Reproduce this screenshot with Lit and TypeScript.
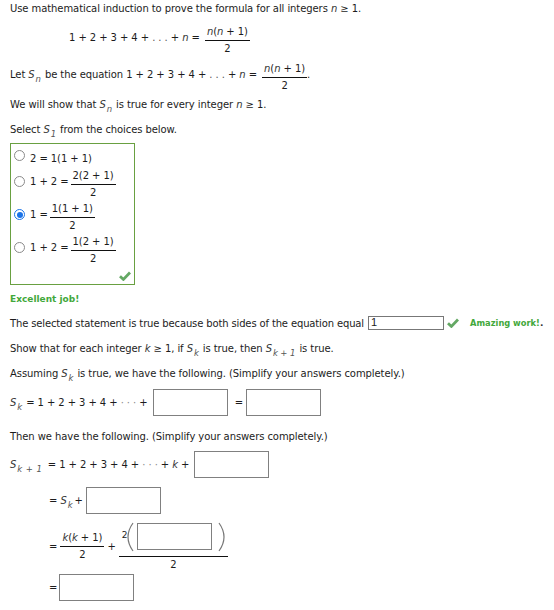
import { LitElement, html, css } from "lit";
import { customElement } from "lit/decorators.js";

const frac = (n: unknown, d: unknown, cls = "") =>
  html`<span class="frac ${cls}"><span class="num">${n}</span><span class="den">${d}</span></span>`;
const S = (s: string, cls = "") => html`<span class="s ${cls}"><i>S</i><sub>${s}</sub></span>`;
const nFrac = () => frac(html`<i>n</i>(<i>n</i> + 1)`, "2");
const dots = html`<span class="dots">. . .</span>`;
const cdots = html`<span class="cdots">· · ·</span>`;

@customElement("app-root")
export class AppRoot extends LitElement {
  static styles = css`
    :host { display: block; width: 554px; height: 610px; overflow: hidden; background: #fff;
      font-family: "DejaVu Sans", Verdana, sans-serif; font-size: 10px; letter-spacing: -0.08px; color: #1c1c1c; }
    .page { padding: 0 0 0 10px; display: flex; flex-direction: column; }
    .line { display: flex; align-items: center; white-space: pre; height: 16px; }
    .r30 { height: 30px; }
    .r27 { height: 27px; }
    .r50 { height: 50px; }
    .r14 { height: 14px; }
    .eq1 { margin-top: 6px; padding-left: 59px; }
    .let { margin-top: 7px; }
    .m7 { margin-top: 7px; }
    .m8 { margin-top: 8px; }
    .m9 { margin-top: 9px; }
    .m10 { margin-top: 10px; }
    .m12 { margin-top: 12px; }
    .m3 { margin-top: 3px; }
    .tight { letter-spacing: -0.14px; }
    i { color: #333; font-style: italic; }
    .s { display: inline-flex; align-items: baseline; margin-right: 4px; }
    .s.wide { margin-right: 6px; word-spacing: 1px; }
    .s.close { margin-right: 2px; }
    sub { font-size: 8.5px; line-height: 0; position: relative; top: 4px; margin-left: 1px; color: #555; font-style: italic; }
    .frac { display: inline-flex; flex-direction: column; align-items: stretch; text-align: center; margin: 5px 0 0 2px; }
    .frac.mid { margin: 0; }
    .frac.opt1 { margin-left: -1px; }
    .num { border-bottom: 1.5px solid #111; padding: 0 2px 2px; line-height: 13px; }
    .den { line-height: 13px; padding-top: 1px; }
    .dots { color: #555; }
    .cdots { color: #888; }
    .box { width: 125px; height: 142px; box-sizing: border-box; border: 1.5px solid #69a041; position: relative; margin-top: 6px; padding-top: 5px; display: flex; flex-direction: column; }
    .opt { display: flex; align-items: center; white-space: pre; height: 33px; padding-left: 2px; }
    .opt.first { height: 19px; margin-bottom: -3px; }
    .radio { width: 9px; height: 9px; border-radius: 50%; border: 1px solid #8a8a8a; background: #fff; margin: 0 5px 0 1px; flex: none; }
    .radio.first { align-self: flex-start; margin-top: 1px; }
    .radio.on { border-color: #1a73e8; position: relative; }
    .radio.on::after { content: ""; position: absolute; inset: 1.5px; border-radius: 50%; background: #1a73e8; }
    .boxcheck { position: absolute; right: 3px; bottom: 3px; display: flex; }
    .excellent { margin-top: 7px; font-size: 9px; letter-spacing: 0; font-weight: 700; color: #42a83a; height: 14px; line-height: 14px; }
    .field { box-sizing: border-box; width: 75px; height: 27px; border: 1.5px solid #808080; background: #fff; flex: none; margin-left: 2px; }
    .field.tail { margin-left: 0; }
    .field.near { margin-left: 0; }
    .field.last { margin-left: -1px; }
    .small { box-sizing: border-box; width: 76px; height: 14px; border: 1.5px solid #777; margin-left: 1px; padding-left: 2px; line-height: 11px; font-family: "Liberation Sans", sans-serif; font-size: 11px; flex: none; }
    .tick { margin-left: 3px; display: inline-flex; }
    .amazing { font-size: 8.3px; letter-spacing: 0; font-weight: 700; color: #42a83a; margin-left: 11px; }
    .period { font-size: 9px; font-weight: 700; color: #333; }
    .eqsep { margin: 0 3px 0 7px; }
    .indent { padding-left: 39px; }
    .big { display: inline-flex; flex-direction: column; margin-left: 0; width: 109px; }
    .big .num { display: flex; align-items: center; padding: 0 0 0 3px; height: 35px; border-bottom: 1.5px solid #111; }
    .big .den { text-align: center; }
    .big .sm2 { font-size: 9px; margin-bottom: 7px; }
    .big .field { margin: 0 0 4px 0; }
    .paren { flex: none; margin-bottom: 4px; }
    .paren.l { margin-right: 3px; }
    .paren.r { margin-left: 6px; }
  `;

  check() {
    return html`<svg width="12" height="10" viewBox="0 0 12 10"><path d="M1 5.2 L4.4 8.4 L11 1.6" fill="none" stroke="#64a864" stroke-width="2.8"/></svg>`;
  }

  render() {
    return html`<div class="page">
      <div class="line">Use mathematical induction to prove the formula for all integers <i>n</i> ≥ 1.</div>
      <div class="line r30 eq1">1 + 2 + 3 + 4 + ${dots} + <i>n</i> = ${nFrac()}</div>
      <div class="line r30 let">Let ${S("n")}be the equation 1 + 2 + 3 + 4 + ${dots} + <i>n</i> = ${nFrac()}.</div>
      <div class="line m7">We will show that ${S("n")}is true for every integer <i>n</i> ≥ 1.</div>
      <div class="line m9">Select ${S("1")}from the choices below.</div>
      <div class="box">
        <div class="opt first"><span class="radio first"></span>2 = 1(1 + 1)</div>
        <div class="opt"><span class="radio"></span>1 + 2 = ${frac("2(2 + 1)", "2", "opt1")}</div>
        <div class="opt"><span class="radio on"></span>1 = ${frac("1(1 + 1)", "2", "opt1")}</div>
        <div class="opt"><span class="radio"></span>1 + 2 = ${frac("1(2 + 1)", "2", "opt1")}</div>
        <span class="boxcheck">${this.check()}</span>
      </div>
      <div class="excellent">Excellent job!</div>
      <div class="line r14 m10 tight">The selected statement is true because both sides of the equation equal <span class="small">1</span><span class="tick">${this.check()}</span><span class="amazing">Amazing work!<span class="period">.</span></span></div>
      <div class="line m10">Show that for each integer <i>k</i> ≥ 1, if ${S("k")}is true, then ${S("k + 1")}is true.</div>
      <div class="line m9">Assuming ${S("k")}is true, we have the following. (Simplify your answers completely.)</div>
      <div class="line r27 m8">${S("k")}= 1 + 2 + 3 + 4 + ${cdots} + <span class="field"></span><span class="eqsep">=</span><span class="field tail"></span></div>
      <div class="line m12">Then we have the following. (Simplify your answers completely.)</div>
      <div class="line r27 m7">${S("k + 1", "wide")}= 1 + 2 + 3 + 4 + ${cdots} + <i>k</i> + <span class="field"></span></div>
      <div class="line indent r27 m9">= ${S("k", "close")}+ <span class="field near"></span></div>
      <div class="line indent r50 m7">= ${frac(html`<i>k</i>(<i>k</i> + 1)`, "2", "mid")} + <span class="big"><span class="num"><span class="sm2">2</span><svg class="paren l" width="7" height="30" viewBox="0 0 7 30"><path d="M6 1 Q1 8 1 15 Q1 22 6 29" fill="none" stroke="#777" stroke-width="1.2"/></svg><span class="field"></span><svg class="paren r" width="7" height="30" viewBox="0 0 7 30"><path d="M1 1 Q6 8 6 15 Q6 22 1 29" fill="none" stroke="#777" stroke-width="1.2"/></svg></span><span class="den">2</span></span></div>
      <div class="line indent r27 m3">= <span class="field last"></span></div>
    </div>`;
  }
}
